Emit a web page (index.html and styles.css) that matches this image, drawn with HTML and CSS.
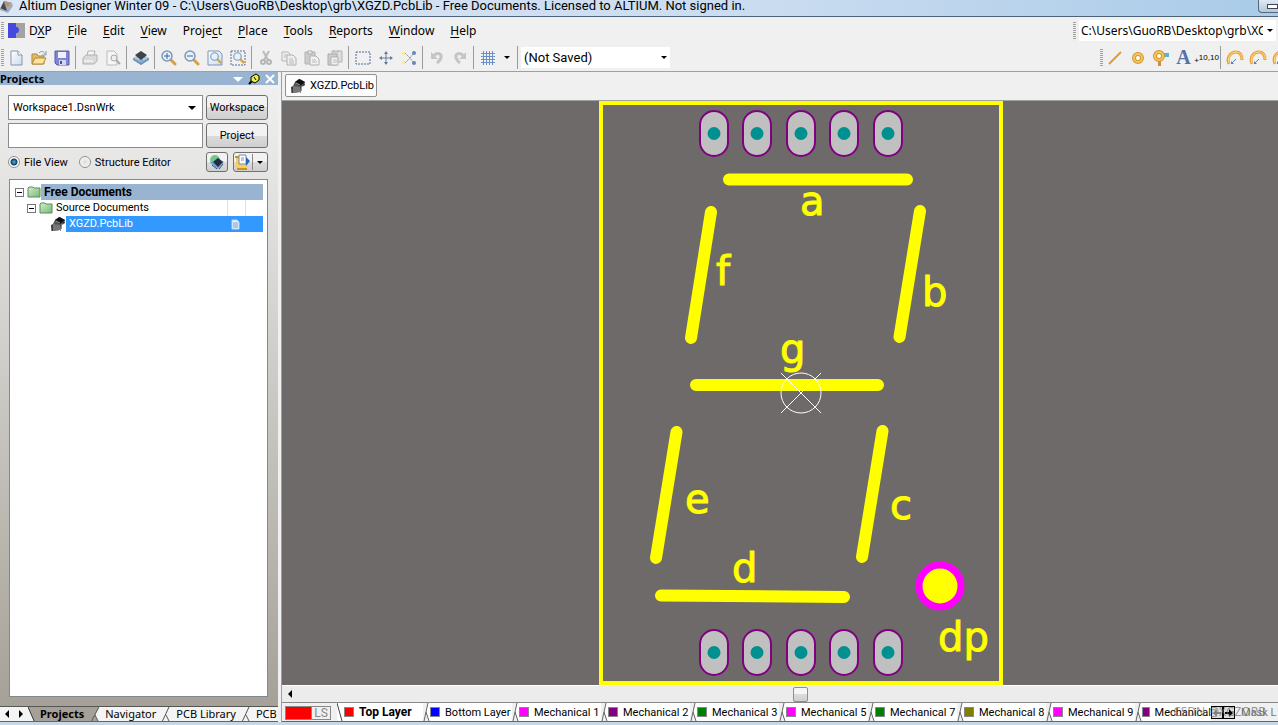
FILE: index.html
```
<!DOCTYPE html>
<html lang="en">
<head>
  <meta charset="UTF-8" />
  <meta name="viewport" content="width=device-width, initial-scale=1.0"/>
  <title>Altium Designer Winter 09</title>
  <link rel="stylesheet" href="styles.css">
</head>
<body>

<svg class="defs" aria-hidden="true">
  <defs>
    <linearGradient id="folderFill" x1="0" y1="0" x2="1" y2="1"><stop offset="0" stop-color="#d2edcd"/><stop offset="1" stop-color="#78b878"/></linearGradient>
    <linearGradient id="paper" x1="0" y1="0" x2="1" y2="1"><stop offset="0" stop-color="#fff"/><stop offset="1" stop-color="#c9dbee"/></linearGradient>
  </defs>
  <symbol id="chip" viewBox="0 0 16 16">
    <path d="M1 9l2-1 2-4 5-3 5 3-1 4-3 1-1 5-8 1z" fill="#555"/>
    <path d="M5 4l4-3 6 3-5 4z" fill="#111"/>
    <path d="M3 8l7 1v5l-7 1z" fill="#777"/>
    <path d="M1 10h2M1 12h2M1 14h2M10 10h2M10 12h2M10 14h1M13 6l2 1" stroke="#222"/>
    <path d="M6 5l4 2" stroke="#999"/>
  </symbol>
  <symbol id="folder" viewBox="0 0 14 12">
    <path d="M1 2l1-1h4l1 1h6v9H1z" fill="url(#folderFill)" stroke="#5b8b5b"/>
  </symbol>
  <symbol id="lens" viewBox="0 0 16 16">
    <path d="M10 10l4 4" stroke="#d8a13c" stroke-width="3" stroke-linecap="round"/>
    <circle cx="6" cy="6" r="5" fill="#e6f1fb" stroke="#8097b4" stroke-width="1.5"/>
  </symbol>
  <symbol id="gauge" viewBox="0 0 18 16">
    <path d="M3 14C0 7 5 2 10 2c4 0 6 3 6 8" fill="none" stroke="#e8a43a" stroke-width="3"/>
    <path d="M3 13C1 7 5 2 10 2c4 0 6 3 6 7" fill="none" stroke="#ffdc8a"/>
    <path d="M6 13l4-4" stroke="#5b82b8"/><path d="M5 14v-3l3 3z" fill="#5b82b8"/>
  </symbol>
  <symbol id="arrow" viewBox="0 0 6 3"><path d="M0 0h6L3 3z"/></symbol>
  <symbol id="slant" viewBox="0 0 7 18">
    <path d="M0 0h5L3 8l3 10H0z" fill="#f0f0f0"/>
    <path d="M5 0L1 18M3 9l3 9" fill="none" stroke="#666"/>
  </symbol>
</svg>

<header class="titlebar">
  <svg class="app-icon" viewBox="0 0 14 14"><path d="M0 9L4 1l8 2-4 9z" fill="#454a55"/><path d="M4 1l8 2 1 3-5 7-8-3v-2l7 3z" fill="#a5adba"/><path d="M4 4l3-2 3 2-2 3z" fill="#c98d52"/></svg>
  <span class="title">Altium Designer Winter 09 - C:\Users\GuoRB\Desktop\grb\XGZD.PcbLib - Free Documents. Licensed to ALTIUM. Not signed in.</span>
  <button class="minimize" aria-label="Minimize"><span></span></button>
</header>

<nav class="menubar">
  <span class="grip"></span>
  <svg class="dxp-icon" viewBox="0 0 17 15"><path d="M0 0h17v15H0z" fill="#a3a3a3"/><path d="M0 0h8v4c4-1 4 7 0 6v5H0z" fill="#4649e0"/></svg>
  <button>D<u>X</u>P</button>
  <button><u>F</u>ile</button>
  <button><u>E</u>dit</button>
  <button><u>V</u>iew</button>
  <button>Proje<u>c</u>t</button>
  <button><u>P</u>lace</button>
  <button><u>T</u>ools</button>
  <button><u>R</u>eports</button>
  <button><u>W</u>indow</button>
  <button><u>H</u>elp</button>
  <div class="path-bar">
    <span class="grip"></span>
    <div class="combo">
      <select aria-label="Document path"><option>C:\Users\GuoRB\Desktop\grb\XGZD.PcbLib</option></select>
      <svg class="combo-arrow"><use href="#arrow"/></svg>
    </div>
  </div>
</nav>

<div class="toolbar">
  <span class="grip"></span>
  <button aria-label="New"><svg viewBox="0 0 16 16"><path d="M3 1h7l4 4v10H3z" fill="url(#paper)" stroke="#8595ad"/><path d="M10 1v4h4" fill="#fff" stroke="#8595ad"/></svg></button>
  <button aria-label="Open"><svg viewBox="0 0 16 16"><path d="M1 14V4h5l1 2h6v8z" fill="#e6b95a" stroke="#a9894d"/><path d="M1 14l3-6h11l-3 6z" fill="#ffe39a" stroke="#b08a3a"/><path d="M8 3c3-3 5-1 6 1m1-3v4h-4" fill="none" stroke="#7d9cc4"/></svg></button>
  <button aria-label="Save"><svg viewBox="0 0 16 16"><path d="M1 1h14v14H3l-2-2z" fill="#8084d6" stroke="#5a5ea8"/><path d="M4 2h8v6H4z" fill="#eef2ff"/><path d="M5 10h7v5H5z" fill="#d3d6ee"/><path d="M6 11h2v3H6z" fill="#4b4f92"/></svg></button>
  <span class="sep"></span>
  <button aria-label="Print" class="off"><svg viewBox="0 0 16 16"><path d="M5 6l1-5h7l-1 5" fill="#f4f4f4" stroke="#b5b5b5"/><path d="M1 8l3-3h11v6l-3 3H1z" fill="#dadada" stroke="#b0b0b0"/><path d="M2 11h9" stroke="#fff"/></svg></button>
  <button aria-label="Print preview" class="off"><svg viewBox="0 0 16 16"><path d="M2 1h7l3 3v11H2z" fill="#f5f5f5" stroke="#bbb"/><circle cx="9" cy="8" r="3" fill="#eee" stroke="#aaa"/><path d="M11 10l4 4" stroke="#aaa" stroke-width="2"/></svg></button>
  <span class="sep"></span>
  <button aria-label="Board"><svg viewBox="0 0 16 16"><path d="M0 8l8-4 8 4-8 7z" fill="#8db2d3"/><path d="M0 8v2l8 5v-2zM16 8v2l-8 5v-2z" fill="#6b93b8"/><path d="M2 5l6-4 6 4-6 5z" fill="#3c434c"/><path d="M3 7v2m2-1v2m8-3v2m-2-1v2" stroke="#ddd"/></svg></button>
  <span class="sep"></span>
  <button aria-label="Zoom in"><svg viewBox="0 0 16 16"><use href="#lens"/><path d="M3 6h6M6 3v6" stroke="#3664a4"/></svg></button>
  <button aria-label="Zoom out"><svg viewBox="0 0 16 16"><use href="#lens"/><path d="M3 6h6" stroke="#3664a4"/></svg></button>
  <button aria-label="Fit document"><svg viewBox="0 0 16 16"><path d="M1 1h11l3 3v11H1z" fill="url(#paper)" stroke="#7c96b8"/><use href="#lens" x="3" y="2" width="12" height="12"/></svg></button>
  <button aria-label="Fit area"><svg viewBox="0 0 16 16"><path d="M1 1h14v14H1z" fill="none" stroke="#566f94" stroke-dasharray="2 1"/><use href="#lens" x="3" y="2" width="12" height="12"/></svg></button>
  <span class="sep"></span>
  <button aria-label="Cut" class="off"><svg viewBox="0 0 16 16"><path d="M5 1l5 9M11 1l-5 9" stroke="#bbb" stroke-width="2"/><circle cx="5" cy="12" r="2" fill="none" stroke="#b5b5b5" stroke-width="2"/><circle cx="11" cy="12" r="2" fill="none" stroke="#b5b5b5" stroke-width="2"/></svg></button>
  <button aria-label="Copy" class="off"><svg viewBox="0 0 16 16"><path d="M1 2h6l2 2v7H1z" fill="#eee" stroke="#b5b5b5"/><path d="M6 5h6l3 3v7H6z" fill="#eee" stroke="#b0b0b0"/><path d="M3 5h3M3 7h2M8 9h4M8 11h5M8 13h5" stroke="#bbb"/></svg></button>
  <button aria-label="Paste" class="off"><svg viewBox="0 0 16 16"><path d="M1 2h10v12H1z" fill="#ccc" stroke="#b3b3b3"/><path d="M4 1h4v3H4z" fill="#eee" stroke="#aaa"/><path d="M6 6h6l3 3v6H6z" fill="#f2f2f2" stroke="#b0b0b0"/><path d="M8 10h4M8 12h5" stroke="#bbb"/></svg></button>
  <button aria-label="Paste array" class="off"><svg viewBox="0 0 16 16"><path d="M5 1h10v11H5z" fill="#ddd" stroke="#b3b3b3"/><path d="M1 4h9v11H1z" fill="#ccc" stroke="#aaa"/><path d="M7 0h4v2H7zM4 7h7v8H4z" fill="#f2f2f2" stroke="#b0b0b0"/><path d="M6 10h4M6 12h4" stroke="#bbb"/></svg></button>
  <span class="sep"></span>
  <button aria-label="Select"><svg viewBox="0 0 16 16"><path d="M1 2h14v12H1z" fill="none" stroke="#4e6ea0" stroke-dasharray="2 1"/></svg></button>
  <button aria-label="Move"><svg viewBox="0 0 16 16"><path d="M8 2v12M2 8h12" stroke="#647a9f"/><path d="M8 1l2 3H6zM8 15l-2-3h4zM1 8l3-2v4zM15 8l-3 2V6z" fill="#647a9f"/></svg></button>
  <button aria-label="Cross probe"><svg viewBox="0 0 16 16"><path d="M4 3l5 5-5 5M12 4L9 8l3 4" fill="none" stroke="#8793a4" stroke-dasharray="2 1"/><path d="M1 2h3v3H1zM1 11h3v3H1z" fill="#f4eda4"/><circle cx="13" cy="3" r="2" fill="#6688b9"/><circle cx="13" cy="13" r="2" fill="#6688b9"/></svg></button>
  <span class="sep"></span>
  <button aria-label="Undo" class="off"><svg viewBox="0 0 16 16"><path d="M4 6c4-4 9-3 8 2-1 2-2 4-4 5" fill="none" stroke="#c4c4c4" stroke-width="3"/><path d="M2 2v7h7z" fill="#c6c6c6"/></svg></button>
  <button aria-label="Redo" class="off"><svg viewBox="0 0 16 16"><path d="M12 6C8 2 3 3 4 8c1 2 2 4 4 5" fill="none" stroke="#c4c4c4" stroke-width="3"/><path d="M14 2v7H7z" fill="#c6c6c6"/></svg></button>
  <span class="sep"></span>
  <button aria-label="Grid"><svg viewBox="0 0 16 16"><path d="M3.500 1v14M6.500 1v14M9.500 1v14M12.500 1v14M1 3.500h14M1 6.500h14M1 9.500h14M1 12.500h14" stroke="#6c8fc7"/></svg></button>
  <button aria-label="Grid options" class="narrow"><svg class="combo-arrow"><use href="#arrow"/></svg></button>
  <span class="sep"></span>
  <div class="combo filter">
    <select aria-label="Filter"><option>(Not Saved)</option></select>
    <svg class="combo-arrow"><use href="#arrow"/></svg>
  </div>
  <div class="place-tools">
    <span class="grip"></span>
    <button aria-label="Place line"><svg viewBox="0 0 16 16"><path d="M2 14L14 2" stroke="#e09b32" stroke-width="2"/></svg></button>
    <button aria-label="Place pad"><svg viewBox="0 0 16 16"><circle cx="8" cy="8" r="4" fill="#fff" stroke="#d0963c" stroke-width="4"/><circle cx="8" cy="8" r="4" fill="none" stroke="#f7c650" stroke-width="2"/></svg></button>
    <button aria-label="Place via"><svg viewBox="0 0 16 16"><path d="M5 8h3v8H5z" fill="#cf8a50"/><path d="M9 3h7v4H9z" fill="#59b5d4"/><circle cx="6" cy="6" r="4" fill="#fff" stroke="#d0963c" stroke-width="4"/><circle cx="6" cy="6" r="4" fill="none" stroke="#f7c650" stroke-width="2"/></svg></button>
    <button aria-label="Place string" class="letter">A</button>
    <button aria-label="Place coordinate" class="coord"><b>+</b>10,10</button>
    <span class="sep"></span>
    <button aria-label="Arc by center"><svg viewBox="0 0 18 16"><use href="#gauge"/></svg></button>
    <button aria-label="Arc by edge"><svg viewBox="0 0 18 16"><use href="#gauge"/></svg></button>
    <button aria-label="Arc any angle"><svg viewBox="0 0 18 16"><use href="#gauge"/></svg></button>
  </div>
</div>

<main>
  <aside>
    <div class="panel-head">
      <h2>Projects</h2>
      <button aria-label="Panel menu"><svg viewBox="0 0 12 12"><path d="M1 4h10L6 9z" fill="#fff"/></svg></button>
      <button aria-label="Pin"><svg viewBox="0 0 12 12"><path d="M1 11l4-4" stroke="#000" stroke-width="2"/><path d="M3 4l5-3 3 2v4l-4 3-4-2z" fill="#ee4" stroke="#000"/><path d="M6 4l2 3" stroke="#000"/></svg></button>
      <button aria-label="Close"><svg viewBox="0 0 12 12"><path d="M2 2l8 8M10 2l-8 8" stroke="#fff" stroke-width="2"/></svg></button>
    </div>
    <div class="panel">
      <div class="panel-form">
        <div class="combo boxed">
          <select aria-label="Workspace"><option>Workspace1.DsnWrk</option></select>
          <svg class="combo-arrow"><use href="#arrow"/></svg>
        </div>
        <button class="btn">Workspace</button>
        <input type="text" class="boxed" aria-label="Project name">
        <button class="btn">Project</button>
      </div>
      <div class="view-row">
        <label><input type="radio" name="view" checked>File View</label>
        <label><input type="radio" name="view">Structure Editor</label>
        <button class="btn small first" aria-label="Show document"><svg viewBox="0 0 16 16"><circle cx="6" cy="6" r="5" fill="#76c889"/><path d="M1 9l7-5 7 4-6 7z" fill="#6aa3d8"/><path d="M4 8l5-4 5 4-5 5z" fill="#222d38"/><path d="M3 11l5 4M14 10l-4 5" stroke="#27527c"/></svg></button>
        <button class="btn small wide" aria-label="Options"><svg viewBox="0 0 16 16"><path d="M1 3h3v12h9" fill="none" stroke="#ca9320" stroke-width="2"/><path d="M2 4h11v10H2z" fill="#f5cf66"/><path d="M5 1h7v9H5z" fill="#fff" stroke="#6c8db9"/><path d="M7 4h3M7 6h3" stroke="#88a"/><path d="M12 3l4 4-4 5z" fill="#2766be"/></svg><i></i><svg class="combo-arrow"><use href="#arrow"/></svg></button>
      </div>
      <ul class="tree">
        <li class="root"><span class="toggle"></span><svg class="folder"><use href="#folder"/></svg><span class="label">Free Documents</span></li>
        <li class="group"><span class="toggle"></span><svg class="folder"><use href="#folder"/></svg><span class="label">Source Documents</span><span class="cell"></span><span class="cell"></span></li>
        <li class="file"><svg class="chip"><use href="#chip"/></svg><span class="label">XGZD.PcbLib</span><span class="cell"><svg viewBox="0 0 9 11"><path d="M1 1h5l2 2v7H1z" fill="#eef5ff" stroke="#b9d4f2"/><path d="M2 4h5M2 6h5M2 8h5" stroke="#689cd2"/></svg></span><span class="cell"></span></li>
      </ul>
    </div>
    <div class="panel-tabs">
      <button aria-label="Scroll left" class="scroll"><svg viewBox="0 0 4 8"><path d="M4 0v8L0 4z"/></svg></button>
      <button aria-label="Scroll right" class="scroll"><svg viewBox="0 0 4 8"><path d="M0 0v8l4-4z"/></svg></button>
      <svg class="edge" viewBox="0 0 8 16"><path d="M0 0h8v16h-1z" fill="#a5a198"/><path d="M0 0l7 16" stroke="#333" fill="none"/></svg>
      <button class="active">Projects</button>
      <svg class="edge" viewBox="0 0 8 16"><path d="M0 0h8L4 8l4 8H0z" fill="#a5a198"/><path d="M8 0L4 8l4 8z" fill="#f4f4f4"/><path d="M8 0L0 15M4 8l4 8" stroke="#555" fill="none"/></svg>
      <button>Navigator</button>
      <svg class="edge" viewBox="0 0 8 16"><path d="M7 0L0 15M4 8l4 8" stroke="#555" fill="none"/></svg>
      <button>PCB Library</button>
      <svg class="edge" viewBox="0 0 8 16"><path d="M7 0L0 15M4 8l4 8" stroke="#555" fill="none"/></svg>
      <button>PCB</button>
    </div>
  </aside>

  <section class="workspace">
    <div class="doc-tabs">
      <button><svg class="chip"><use href="#chip"/></svg>XGZD.PcbLib</button>
    </div>
    <div class="canvas">
      <svg viewBox="282 101 996 584">
        <rect class="outline" x="601" y="103" width="400" height="580"/>
        <g class="pads">
          <rect x="700" y="111" width="28" height="45" rx="14"/>
          <rect x="743" y="111" width="28" height="45" rx="14"/>
          <rect x="787" y="111" width="28" height="45" rx="14"/>
          <rect x="830" y="111" width="28" height="45" rx="14"/>
          <rect x="874" y="111" width="28" height="45" rx="14"/>
          <rect x="700" y="630" width="28" height="45" rx="14"/>
          <rect x="743" y="630" width="28" height="45" rx="14"/>
          <rect x="787" y="630" width="28" height="45" rx="14"/>
          <rect x="830" y="630" width="28" height="45" rx="14"/>
          <rect x="874" y="630" width="28" height="45" rx="14"/>
        </g>
        <path class="holes" d="M714 133.500h0M757 133.500h0M801 133.500h0M844 133.500h0M888 133.500h0M714 652.500h0M757 652.500h0M801 652.500h0M844 652.500h0M888 652.500h0"/>
        <path class="segments" d="M729 179.500H907M711 212L691 338M920 211L899.500 337M696 385H878M676.500 432L656 558M882.500 431L862 557M661 595.500L844 597"/>
        <g class="names">
          <text x="800" y="215">a</text>
          <text x="922" y="306">b</text>
          <text x="890" y="519">c</text>
          <text x="732" y="582">d</text>
          <text x="685" y="513">e</text>
          <text x="716" y="285">f</text>
          <text x="780" y="363">g</text>
          <text x="938" y="651">dp</text>
        </g>
        <circle class="dot" cx="940" cy="586" r="21"/>
        <g class="origin"><circle cx="801" cy="393" r="20"/><path d="M781 373l40 40M821 373l-40 40"/></g>
      </svg>
    </div>
    <div class="scrollbar">
      <button aria-label="Scroll left"><svg viewBox="0 0 4 8"><path d="M4 0v8L0 4z"/></svg></button>
      <span class="thumb"></span>
    </div>
    <div class="layer-tabs">
      <button class="ls"><i class="red"></i><span>LS</span></button>
      <button class="layer active"><svg viewBox="0 0 7 18"><path d="M0 0l5 18" stroke="#444"/></svg><i class="red"></i>Top Layer</button>
      <button class="layer"><svg><use href="#slant"/></svg><i class="blue"></i>Bottom Layer</button>
      <button class="layer"><svg><use href="#slant"/></svg><i class="magenta"></i>Mechanical 1</button>
      <button class="layer"><svg><use href="#slant"/></svg><i class="purple"></i>Mechanical 2</button>
      <button class="layer"><svg><use href="#slant"/></svg><i class="green"></i>Mechanical 3</button>
      <button class="layer"><svg><use href="#slant"/></svg><i class="magenta"></i>Mechanical 5</button>
      <button class="layer"><svg><use href="#slant"/></svg><i class="green"></i>Mechanical 7</button>
      <button class="layer"><svg><use href="#slant"/></svg><i class="olive"></i>Mechanical 8</button>
      <button class="layer"><svg><use href="#slant"/></svg><i class="magenta"></i>Mechanical 9</button>
      <button class="layer last"><svg><use href="#slant"/></svg><i class="purple"></i>Mechanical</button>
      <button class="spin" aria-label="Previous layer"><svg viewBox="0 0 8 8"><path d="M0 4l4-4v3h4v2H4v3z" fill="#888"/></svg></button>
      <button class="spin" aria-label="Next layer"><svg viewBox="0 0 8 8"><path d="M8 4L4 0v3H0v2h4v3z"/></svg></button>
      <button class="mask">Mask L</button>
      <span class="watermark">CSDN @XGZORB</span>
    </div>
  </section>
</main>
<footer></footer>

</body>
</html>
```
FILE: styles.css
```
* {
  box-sizing: border-box;
}

body {
  margin: 0;
  height: 100vh;
  display: flex;
  flex-direction: column;
  overflow: hidden;
  background: #f0f0f0;
  color: #000;
  font-family: Roboto, sans-serif;
  font-size: 13px;
}

button, input, select {
  font: inherit;
  color: inherit;
  margin: 0;
  padding: 0;
}

button {
  background: none;
  border: none;
  white-space: nowrap;
}

svg {
  display: block;
  flex-shrink: 0;
}

.defs {
  position: absolute;
  width: 0;
  height: 0;
}

/* title and menu */
.titlebar {
  display: flex;
  flex-shrink: 0;
  height: 17px;
  background: linear-gradient(90deg, #dbe7f5, #cadcf0 60%, #a9cbe8);
  border-bottom: 1px solid #4d6478;
}

.app-icon {
  width: 14px;
  height: 14px;
  margin-right: 5px;
}

.title {
  flex: 1;
  line-height: 12px;
  white-space: nowrap;
}

.minimize {
  width: 20px;
  height: 13px;
  padding-left: 8px;
  border: 1px solid #56687c;
  border-width: 0 0 1px 1px;
  border-radius: 0 0 0 4px;
  background: linear-gradient(#dfe9f3, #b4c6d8);
}

.minimize span {
  display: block;
  height: 5px;
  border: 1px solid #445;
  background: #fff;
}

.menubar {
  display: flex;
  align-items: center;
  flex-shrink: 0;
  height: 27px;
  gap: 16px;
  padding-left: 1px;
  font-family: "Noto Sans", sans-serif;
  font-size: 12px;
}

.menubar u {
  text-underline-offset: 2px;
}

.grip {
  width: 3px;
  height: 18px;
  flex-shrink: 0;
  background: repeating-linear-gradient(#a0a0a0 0 1px, #f0f0f0 1px 2px);
}

.menubar > .grip {
  margin-right: -12px;
}

.dxp-icon {
  width: 17px;
  height: 15px;
  margin-right: -12px;
}

.path-bar {
  display: flex;
  align-items: center;
  gap: 3px;
  width: 205px;
  margin-left: auto;
  padding-right: 2px;
}

.combo {
  display: grid;
  grid-template-columns: 1fr 13px;
  align-items: center;
  flex: 1;
  min-width: 0;
  height: 21px;
  background: #fff;
}

.combo select {
  grid-area: 1 / 1;
  min-width: 0;
  width: 100%;
  height: 100%;
  padding-left: 2px;
  appearance: none;
  border: none;
  background: none;
  overflow: hidden;
}

.combo-arrow {
  width: 6px;
  height: 3px;
  margin: auto;
}

/* toolbar */
.toolbar {
  display: flex;
  align-items: center;
  flex-shrink: 0;
  height: 28px;
  padding-left: 1px;
  border-bottom: 1px solid #a0a0a0;
}

.toolbar button {
  display: flex;
  align-items: center;
  justify-content: center;
  flex-shrink: 0;
  width: 23px;
  height: 23px;
}

.toolbar button svg {
  width: 16px;
  height: 16px;
}

.toolbar .narrow {
  width: 16px;
}

.toolbar .narrow svg {
  width: 6px;
  height: 3px;
}

.sep {
  width: 1px;
  height: 23px;
  margin: 0 2px;
  flex-shrink: 0;
  background: #9a9a9a;
}

.toolbar .filter {
  flex: none;
  width: 149px;
  margin-left: 1px;
}

.filter select {
  padding-left: 3px;
}

.place-tools {
  display: flex;
  align-items: center;
  width: 178px;
  margin-left: auto;
  overflow: hidden;
}

.place-tools button:nth-last-child(-n+3) svg {
  width: 18px;
}

.toolbar .letter {
  color: #5372a8;
  font: bold 20px "Liberation Serif", serif;
}

.toolbar .coord {
  font: 8px "Liberation Sans", sans-serif;
}

.coord b {
  padding-top: 5px;
  font-weight: normal;
}

/* projects panel */
main {
  display: flex;
  flex: 1;
  min-height: 0;
}

aside {
  display: flex;
  flex-direction: column;
  width: 278px;
  flex-shrink: 0;
}

.panel-head {
  display: flex;
  align-items: center;
  gap: 4px;
  height: 13px;
  padding-right: 2px;
  background: #99b4d1;
}

.panel-head h2 {
  flex: 1;
  margin: 0;
  font: bold 11px "Noto Sans", sans-serif;
  line-height: 13px;
}

.panel-head svg {
  width: 12px;
  height: 12px;
}

.panel {
  display: flex;
  flex-direction: column;
  flex: 1;
  min-height: 0;
  padding: 10px 10px 9px 8px;
  background: linear-gradient(#f0f0f0, #a5a198);
  font-size: 11px;
}

.panel-form {
  display: grid;
  grid-template-columns: 1fr 62px;
  gap: 3px;
}

.boxed {
  width: 100%;
  height: 25px;
  border: 1px solid #8c8c8c;
  border-radius: 0;
  background: #fff;
}

.combo.boxed {
  grid-template-columns: 1fr 20px;
}

.boxed select {
  padding-left: 4px;
}

.boxed .combo-arrow {
  width: 8px;
  height: 4px;
}

.btn {
  display: flex;
  align-items: center;
  justify-content: center;
  border: 1px solid #707070;
  border-radius: 3px;
  background: linear-gradient(#f2f2f2 50%, #dcdcdc 50%, #cfcfcf);
}

.view-row {
  display: flex;
  align-items: center;
  height: 22px;
  margin: 3px 0 6px;
}

.view-row label {
  display: flex;
  align-items: center;
  gap: 4px;
  margin-right: 11px;
}

.view-row input {
  appearance: none;
  width: 12px;
  height: 12px;
  border: 1px solid #8e8f8f;
  border-radius: 50%;
  background: radial-gradient(#ddd, #fff);
}

.view-row input:checked {
  background: radial-gradient(#49b7dc, #153b65 3px, #fff 4px);
}

.small {
  width: 22px;
  height: 20px;
}

.small.first {
  margin-left: auto;
  margin-right: 5px;
}

.small svg:first-child {
  width: 16px;
  height: 16px;
}

.small.wide {
  width: 35px;
}

.wide i {
  width: 1px;
  height: 16px;
  margin-left: 2px;
  background: #888;
}

.tree {
  flex: 1;
  margin: 0 0 0 1px;
  padding: 4px 4px 4px 3px;
  border: 1px solid #828790;
  background: #fff;
  list-style: none;
}

.tree li {
  display: flex;
  align-items: center;
  height: 16px;
  padding-left: 2px;
}

.tree .group {
  padding-left: 14px;
}

.tree .file {
  padding-left: 37px;
}

.toggle {
  display: flex;
  align-items: center;
  width: 9px;
  height: 9px;
  margin-right: 3px;
  padding: 1px;
  border: 1px solid #777;
}

.toggle::before {
  content: "";
  width: 100%;
  height: 1px;
  background: #000;
}

.folder {
  width: 14px;
  height: 12px;
}

.chip {
  width: 16px;
  height: 16px;
}

.label {
  flex: 1;
  padding-left: 3px;
  line-height: 16px;
}

.root .label {
  background: #99b4d1;
  font-size: 12px;
  font-weight: bold;
}

.file .label, .file .cell {
  background: #3399ff;
  color: #fff;
}

.cell {
  width: 18px;
  height: 16px;
  padding: 3px 4px;
}

.cell svg {
  width: 9px;
  height: 11px;
}

.group .cell {
  border-left: 1px solid #e0e0e0;
}

.panel-tabs {
  display: flex;
  height: 16px;
  overflow: hidden;
  background: #f4f4f4;
  border-top: 1px solid #555;
  border-bottom: 1px solid #666;
  font: 11px "Noto Sans", sans-serif;
  line-height: 14px;
}

.panel-tabs button {
  padding: 0 6px;
}

.panel-tabs .scroll {
  width: 15px;
  padding: 0 5px;
}

.scroll svg {
  width: 4px;
  height: 8px;
}

.edge {
  width: 8px;
  height: 16px;
}

.panel-tabs .active {
  padding: 0 7px 0 4px;
  background: #a5a198;
  font-weight: bold;
}

/* document area */
.workspace {
  display: flex;
  flex-direction: column;
  flex: 1;
  min-width: 0;
  margin-left: 3px;
  border-left: 1px solid #a0a0a0;
}

.doc-tabs {
  height: 29px;
  padding: 2px 3px;
  border-bottom: 1px solid #a0a0a0;
}

.doc-tabs button {
  display: flex;
  align-items: center;
  gap: 4px;
  height: 23px;
  padding: 0 2px 0 4px;
  border: 1px solid #919191;
  border-radius: 2px;
  background: #fcfcfc;
  font-size: 11px;
}

.canvas {
  flex: 1;
  min-height: 0;
  background: #6e6a69;
}

.canvas svg {
  width: 100%;
  height: 100%;
}

.outline {
  fill: none;
  stroke: #ff0;
  stroke-width: 4;
}

.pads {
  fill: #c0c0c0;
  stroke: #800080;
  stroke-width: 2;
}

.holes {
  stroke: #009090;
  stroke-width: 13;
  stroke-linecap: round;
}

.segments {
  stroke: #ff0;
  stroke-width: 12;
  stroke-linecap: round;
}

.names {
  fill: #ff0;
  stroke: #ff0;
  stroke-width: 1;
  font: 40px "DejaVu Sans", sans-serif;
}

.dot {
  fill: #ff0;
  stroke: #f0f;
  stroke-width: 7;
}

.origin {
  fill: none;
  stroke: #fff;
}

.scrollbar {
  display: flex;
  align-items: center;
  height: 17px;
  padding-left: 6px;
  border-top: 1px solid #fff;
  background: #ececec;
}

.scrollbar svg {
  width: 4px;
  height: 8px;
}

/* the view is scrolled slightly right of the middle */
.scrollbar .thumb {
  width: 15px;
  height: 15px;
  margin-left: calc(50% + 6px);
  border: 1px solid #8e8e8e;
  border-radius: 2px;
  background: linear-gradient(#f5f5f5 50%, #dcdcdc 50%, #cfcfcf);
}

.layer-tabs {
  position: relative;
  display: flex;
  height: 20px;
  padding-left: 3px;
  overflow: hidden;
  border-top: 1px solid #888;
  border-bottom: 1px solid #666;
  font-size: 11px;
}

.ls {
  display: flex;
  flex-shrink: 0;
  width: 46px;
  height: 14px;
  margin: 3px 6px 0 0;
  border: 1px solid #888;
  color: #888;
  font-size: 12px;
  line-height: 12px;
}

.ls i {
  width: 25px;
  height: 12px;
}

.ls span {
  flex: 1;
  border-left: 1px solid #888;
}

.layer {
  display: flex;
  align-items: center;
  flex-shrink: 0;
  width: 89px;
  background: #fff;
}

.layer svg {
  width: 7px;
  height: 18px;
}

.layer i {
  width: 10px;
  height: 10px;
  margin-right: 5px;
  border: 1px solid #888;
}

.layer.active {
  width: 86px;
  font-size: 12px;
  font-weight: bold;
}

.layer.last {
  width: 76px;
  overflow: hidden;
}

.red { background: #f00; }
.blue { background: #00f; }
.magenta { background: #f0f; }
.purple { background: #800080; }
.green { background: #008000; }
.olive { background: #808000; }

.spin {
  display: flex;
  align-items: center;
  justify-content: center;
  width: 12px;
  height: 13px;
  margin-top: 3px;
  flex-shrink: 0;
  border: 1px solid #000;
  background: #ddd;
}

.spin svg {
  width: 8px;
  height: 8px;
}

.mask {
  padding-left: 6px;
  color: #777;
}

.watermark {
  position: absolute;
  right: 12px;
  top: 0;
  color: rgba(110, 110, 110, 0.7);
  font: 12px "Noto Sans", sans-serif;
}

footer {
  height: 3px;
  flex-shrink: 0;
  background: #c4d8e8;
}
```
